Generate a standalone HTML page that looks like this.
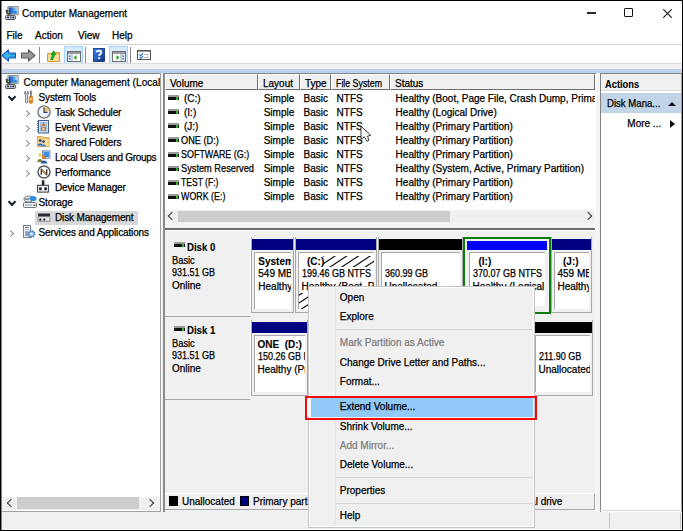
<!DOCTYPE html>
<html><head><meta charset="utf-8">
<style>
*{margin:0;padding:0;box-sizing:border-box}
html,body{width:683px;height:531px;overflow:hidden;background:#000}
body{position:relative;font-family:"Liberation Sans",sans-serif;font-size:10px;line-height:12px;color:#000}
.a{position:absolute}
.t{position:absolute;white-space:nowrap;line-height:12px;font-size:10px;-webkit-text-stroke:0.25px currentColor}
.b{font-weight:bold;-webkit-text-stroke:0.1px currentColor}
.g{color:#7d7d7d}
.clip{position:absolute;overflow:hidden}
.vi{position:absolute;width:11px;height:5px;background:#111;border-top:2px solid #9a9a9a}
.vi:after{content:"";position:absolute;right:1px;top:0;width:2px;height:3px;background:#2fb52f}
.chl,.chr{position:absolute;width:6px;height:6px;border-left:1.5px solid #333;border-bottom:1.5px solid #333}
.chl{transform:rotate(45deg)}
.chr{transform:rotate(-135deg)}
.chd{position:absolute;width:6px;height:6px;border-right:2px solid #15202e;border-bottom:2px solid #15202e;transform:rotate(45deg)}
.chr2{position:absolute;width:5px;height:5px;border-right:1.5px solid #8c8c8c;border-bottom:1.5px solid #8c8c8c;transform:rotate(-45deg)}
.tr .t{letter-spacing:-0.15px}
</style></head><body>
<div class="a" style="left:1px;top:1px;width:681px;height:529px;background:#fff"></div>
<svg class="a" style="left:4.7px;top:5.9px" width="14" height="14" viewBox="0 0 14 14"><defs><linearGradient id="scr" x1="0" y1="0" x2="1" y2="0"><stop offset="0" stop-color="#0d3fb8"/><stop offset="0.5" stop-color="#3d8fe6"/><stop offset="1" stop-color="#bfe2fa"/></linearGradient></defs><rect x="2.9" y="0.5" width="10.3" height="8.2" fill="#d9d2c8" stroke="#8f8a85" stroke-width="0.9"/><rect x="3.8" y="1.4" width="8.5" height="6.4" fill="url(#scr)"/><ellipse cx="10.3" cy="6.3" rx="2" ry="1.4" fill="#2f86e0"/><path d="M0.6 4 L2.2 3.6 L3.4 5.6 L5 4.8 L5.6 8.6 L3 8.8 L1.2 7.6 Z" fill="#3b3f45"/><circle cx="3.4" cy="6.2" r="0.8" fill="#8fd06a"/><rect x="0.6" y="9.6" width="9.8" height="3.9" rx="1" fill="#d4d6d9" stroke="#3d4248" stroke-width="0.9"/><circle cx="3" cy="11.5" r="1" fill="#2a2e33"/><circle cx="5.7" cy="11.5" r="1" fill="#2f5fa8"/><circle cx="8.3" cy="11.5" r="1" fill="#2a2e33"/></svg>
<div class="t " style="left:22px;top:8px;">Computer Management</div>
<div class="a" style="left:586.5px;top:12.3px;width:9px;height:1.4px;background:#2a2a2a"></div>
<div class="a" style="left:624px;top:8px;width:9px;height:9px;border:1px solid #111;border-radius:1px"></div>
<svg class="a" style="left:662.5px;top:8.5px" width="9" height="9" viewBox="0 0 9 9"><path d="M0.3 0.3 L8.7 8.7 M8.7 0.3 L0.3 8.7" stroke="#1a1a1a" stroke-width="1.15"/></svg>
<div class="t " style="left:6.5px;top:29.5px;">File</div>
<div class="t " style="left:35px;top:29.5px;">Action</div>
<div class="t " style="left:78px;top:29.5px;">View</div>
<div class="t " style="left:112px;top:29.5px;">Help</div>
<div class="a" style="left:1px;top:44px;width:681px;height:1px;background:#d4d4d4"></div>
<svg class="a" style="left:1px;top:49px" width="16" height="13" viewBox="0 0 16 13"><path d="M1 6.5 L7.5 0.8 L7.5 4 L14.5 4 L14.5 9 L7.5 9 L7.5 12.2 Z" fill="#38b6e8" stroke="#1b54c4" stroke-width="1.1" stroke-linejoin="round"/><path d="M9 5.5 H14 M9 7.5 H14" stroke="#2d78d0" stroke-width="0.8"/></svg>
<svg class="a" style="left:20px;top:49px" width="16" height="13" viewBox="0 0 16 13"><path d="M15 6.5 L8.5 0.8 L8.5 4 L1.5 4 L1.5 9 L8.5 9 L8.5 12.2 Z" fill="#9a9a9a" stroke="#5d5d5d" stroke-width="1.1" stroke-linejoin="round"/></svg>
<div class="a" style="left:39px;top:47px;width:1px;height:16px;background:#8a8a8a"></div>
<svg class="a" style="left:47px;top:49px" width="14" height="14" viewBox="0 0 14 14"><path d="M0.5 4.5 H4 L5 3.5 H12.5 V12.5 H0.5 Z" fill="#f7c56a" stroke="#e08a1c" stroke-width="0.9"/><rect x="1" y="6" width="11" height="6" fill="#fbdc9a"/><path d="M3 11 L5 6 L3.5 6 L6.5 1 L9.5 6 L8 6 L6 11 Z" fill="#19a61e"/></svg>
<div class="a" style="left:64px;top:46px;width:19px;height:18px;background:#d5ebfc;border:1px solid #9fd3fb"></div>
<svg class="a" style="left:67px;top:51px" width="14" height="11" viewBox="0 0 14 11"><rect x="0.5" y="0.5" width="13" height="10" fill="#fff" stroke="#6e6e6e"/><rect x="1" y="1" width="12" height="2" fill="#9a9a9a"/><rect x="1" y="3" width="3.5" height="7" fill="#dce6f0"/><rect x="2" y="4.5" width="1.5" height="1.5" fill="#3a7fd5"/><rect x="2" y="7" width="1.5" height="1.5" fill="#3a7fd5"/><path d="M5 3 V10" stroke="#8a8a8a" stroke-width="0.8"/><path d="M6.5 6.5 L9.5 4 L9.5 9 Z" fill="#1da21d"/></svg>
<div class="a" style="left:85px;top:47px;width:1px;height:16px;background:#8a8a8a"></div>
<svg class="a" style="left:93px;top:48px" width="12" height="14" viewBox="0 0 12 14"><defs><linearGradient id="hg" x1="0" y1="0" x2="1" y2="1"><stop offset="0" stop-color="#3f8ff0"/><stop offset="1" stop-color="#0b2e8c"/></linearGradient></defs><rect x="0.5" y="0.5" width="11" height="13" fill="url(#hg)" stroke="#0a2a6a" stroke-width="0.8"/><path d="M3.8 4.3 C3.8 2.2 8.3 2.2 8.3 4.3 C8.3 6 6.1 6 6.1 8" fill="none" stroke="#fff" stroke-width="1.8"/><rect x="5.2" y="9.2" width="1.9" height="1.9" fill="#fff"/></svg>
<div class="a" style="left:109px;top:46px;width:19px;height:18px;background:#d5ebfc;border:1px solid #9fd3fb"></div>
<svg class="a" style="left:112px;top:51px" width="14" height="11" viewBox="0 0 14 11"><rect x="0.5" y="0.5" width="13" height="10" fill="#fff" stroke="#6e6e6e"/><rect x="1" y="1" width="12" height="2" fill="#9a9a9a"/><rect x="9.5" y="3" width="3.5" height="7" fill="#dce6f0"/><rect x="10.5" y="4.5" width="1.5" height="1.5" fill="#3a7fd5"/><rect x="10.5" y="7" width="1.5" height="1.5" fill="#3a7fd5"/><path d="M9 3 V10" stroke="#8a8a8a" stroke-width="0.8"/><path d="M4.5 4 L7.5 6.5 L4.5 9 Z" fill="#1da21d"/></svg>
<div class="a" style="left:130px;top:47px;width:1px;height:16px;background:#8a8a8a"></div>
<svg class="a" style="left:137px;top:50px" width="14" height="10" viewBox="0 0 14 10"><rect x="0.5" y="0.5" width="13" height="9" fill="#fff" stroke="#555"/><rect x="1" y="1" width="12" height="1" fill="#999"/><path d="M2.5 4.5 L3.8 5.8 L6 3" fill="none" stroke="#1f74d6" stroke-width="1.1"/><path d="M2.5 7.3 L3.8 8.6 L6 5.8" fill="none" stroke="#1f74d6" stroke-width="1.1"/><path d="M7 4.5 H12 M7 7.5 H12" stroke="#a9a9a9" stroke-width="0.9"/></svg>
<div class="a" style="left:1px;top:63px;width:681px;height:6px;background:#f0f0f0;border-top:1px solid #dcdcdc"></div>
<div class="a" style="left:1px;top:69px;width:681px;height:4px;background:#bcd3ea"></div>
<div class="a" style="left:1px;top:73px;width:160px;height:439px;background:#fff;border-top:1px solid #828282;border-right:1px solid #a0a0a0;border-bottom:1px solid #a0a0a0"></div>
<div class="a" style="left:161px;top:73px;width:2px;height:439px;background:#f4f4f4"></div>
<div class="clip tr" style="left:1px;top:74px;width:159px;height:423px">
<div class="a" style="left:34px;top:136.5px;width:103px;height:14px;background:#d9d9d9"></div>
<div class="t " style="left:22.4px;top:2.8px;letter-spacing:0.07px">Computer Management (Local)</div>
<svg class="a" style="left:4.3px;top:1.0999999999999999px" width="14" height="14" viewBox="0 0 14 14"><defs><linearGradient id="scr" x1="0" y1="0" x2="1" y2="0"><stop offset="0" stop-color="#0d3fb8"/><stop offset="0.5" stop-color="#3d8fe6"/><stop offset="1" stop-color="#bfe2fa"/></linearGradient></defs><rect x="2.9" y="0.5" width="10.3" height="8.2" fill="#d9d2c8" stroke="#8f8a85" stroke-width="0.9"/><rect x="3.8" y="1.4" width="8.5" height="6.4" fill="url(#scr)"/><ellipse cx="10.3" cy="6.3" rx="2" ry="1.4" fill="#2f86e0"/><path d="M0.6 4 L2.2 3.6 L3.4 5.6 L5 4.8 L5.6 8.6 L3 8.8 L1.2 7.6 Z" fill="#3b3f45"/><circle cx="3.4" cy="6.2" r="0.8" fill="#8fd06a"/><rect x="0.6" y="9.6" width="9.8" height="3.9" rx="1" fill="#d4d6d9" stroke="#3d4248" stroke-width="0.9"/><circle cx="3" cy="11.5" r="1" fill="#2a2e33"/><circle cx="5.7" cy="11.5" r="1" fill="#2f5fa8"/><circle cx="8.3" cy="11.5" r="1" fill="#2a2e33"/></svg>
<div class="t " style="left:37.6px;top:17.8px;">System Tools</div>
<svg class="a" style="left:21.8px;top:16.1px" width="14" height="14" viewBox="0 0 14 14"><path d="M2.5 1 C1 2 1 4 2.5 5 L2.5 12 C2.5 13.5 4.5 13.5 4.5 12 L4.5 5 C6 4 6 2 4.5 1 L4.5 3.5 L2.5 3.5 Z" fill="#d6d9dc" stroke="#7d8288" stroke-width="0.9"/><rect x="7.2" y="0.5" width="1.4" height="6" fill="#55595e"/><path d="M6.2 6.5 L9.6 6.5 L9.8 12.5 C9.8 13.6 6 13.6 6 12.5 Z" fill="#e8891e" stroke="#b86512" stroke-width="0.6"/><rect x="6.5" y="8.6" width="3" height="1" fill="#fff2d8"/></svg>
<div class="chd" style="left:7.5px;top:19.8px"></div>
<div class="t " style="left:54px;top:32.8px;">Task Scheduler</div>
<svg class="a" style="left:35.9px;top:31.099999999999998px" width="14" height="14" viewBox="0 0 14 14"><circle cx="7" cy="7" r="6.1" fill="#eef4fa" stroke="#6f7379" stroke-width="1.4"/><path d="M7 1.5 A5.5 5.5 0 0 1 12.3 6 L7 7 Z" fill="#f3c552"/><circle cx="7" cy="7" r="4.9" fill="none" stroke="#d3dde8" stroke-width="0.5"/><path d="M7 2.6 L7 7.3 L10.6 7.3" fill="none" stroke="#1f3f8a" stroke-width="1.2"/></svg>
<div class="chr2" style="left:23px;top:37.0px"></div>
<div class="t " style="left:54px;top:47.8px;">Event Viewer</div>
<svg class="a" style="left:35.9px;top:46.099999999999994px" width="14" height="14" viewBox="0 0 14 14"><rect x="1.5" y="0.5" width="10" height="12.5" fill="#d8e6f3" stroke="#3f5f86"/><path d="M0.5 1 V13" stroke="#6a7580" stroke-width="1" stroke-dasharray="1 1"/><rect x="3" y="2" width="7" height="9.5" fill="#9cc3e6"/><path d="M6.5 2 L8.5 6 L4.5 6 Z" fill="#e8781e"/><rect x="4" y="7.5" width="5" height="3" fill="#d85f12"/><rect x="5" y="8.3" width="3" height="1.4" fill="#fde7c5"/></svg>
<div class="chr2" style="left:23px;top:52.0px"></div>
<div class="t " style="left:54px;top:62.8px;">Shared Folders</div>
<svg class="a" style="left:35.9px;top:61.099999999999994px" width="14" height="14" viewBox="0 0 14 14"><path d="M0.5 1.5 H5 L6 2.5 H12 V11.5 H0.5 Z" fill="#f3c873" stroke="#d8952a" stroke-width="0.8"/><rect x="1" y="4" width="10.6" height="7" fill="#fbdd9c"/><circle cx="3.2" cy="5.6" r="1.4" fill="#1d3f7a"/><path d="M0.8 10.5 C1 7.6 5.4 7.6 5.6 10.5 Z" fill="#2a6dc0"/><circle cx="6.5" cy="6.6" r="1.3" fill="#1d3f7a"/><path d="M4.2 11.5 C4.4 8.6 8.6 8.6 8.8 11.5 Z" fill="#3a8ad8"/></svg>
<div class="chr2" style="left:23px;top:67.0px"></div>
<div class="t " style="left:54px;top:77.8px;letter-spacing:-0.3px">Local Users and Groups</div>
<svg class="a" style="left:35.9px;top:76.1px" width="14" height="14" viewBox="0 0 14 14"><rect x="5.5" y="0.8" width="7.5" height="7.5" fill="#bcd6ee" stroke="#7a8ea3" stroke-width="0.9"/><rect x="6.5" y="1.8" width="5.5" height="5.2" fill="#3b8fe0"/><circle cx="3" cy="5" r="1.7" fill="#f2c46a"/><path d="M0.3 12 C0.5 8 5.5 8 5.7 12 Z" fill="#7b7f3a"/><circle cx="7" cy="7.3" r="2" fill="#d4782a"/><path d="M3.6 13.6 C3.9 9.5 10.1 9.5 10.4 13.6 Z" fill="#2f5d9c"/></svg>
<div class="chr2" style="left:23px;top:82.0px"></div>
<div class="t " style="left:54px;top:92.8px;">Performance</div>
<svg class="a" style="left:35.9px;top:91.1px" width="14" height="14" viewBox="0 0 14 14"><circle cx="7" cy="7" r="6" fill="#fff" stroke="#55595e" stroke-width="1.5"/><path d="M4.3 9.8 L4.3 4.2 L9.7 9.8 L9.7 4.2" fill="none" stroke="#2a2a2a" stroke-width="1.3" stroke-linejoin="round"/><path d="M4.8 5 L9.2 9.2" stroke="#e07a1a" stroke-width="1.1"/></svg>
<div class="chr2" style="left:23px;top:97.0px"></div>
<div class="t " style="left:54px;top:107.8px;">Device Manager</div>
<svg class="a" style="left:35.9px;top:106.1px" width="14" height="14" viewBox="0 0 14 14"><rect x="4.8" y="0.3" width="2.6" height="5" fill="#23272d"/><rect x="0.6" y="5.3" width="10.8" height="6.8" fill="#f2f3f4" stroke="#30343a" stroke-width="1"/><rect x="2.2" y="7.4" width="2.4" height="2.8" fill="#111"/><rect x="7.4" y="7.4" width="2.4" height="2.8" fill="#111"/></svg>
<div class="t " style="left:37.6px;top:122.8px;">Storage</div>
<svg class="a" style="left:21.8px;top:121.1px" width="14" height="14" viewBox="0 0 14 14"><rect x="0.5" y="7.5" width="13" height="5" rx="1" fill="#eef1f4" stroke="#6d747c"/><rect x="2" y="9" width="7" height="2" fill="#b9c8d8"/><rect x="10.5" y="9.5" width="2" height="1.5" fill="#5c5c5c"/><ellipse cx="5.5" cy="4" rx="4.5" ry="3" fill="#e3e7ec" stroke="#70777f"/><ellipse cx="10" cy="3.6" rx="3.5" ry="2.6" fill="#2d8fe6"/><rect x="2" y="3.5" width="4" height="1" fill="#444"/></svg>
<div class="chd" style="left:7.5px;top:124.8px"></div>
<div class="t " style="left:54px;top:137.8px;">Disk Management</div>
<svg class="a" style="left:35.9px;top:136.10000000000002px" width="14" height="14" viewBox="0 0 14 14"><rect x="1" y="3.5" width="12" height="3.2" fill="#2a2e34"/><path d="M1 6.7 H13 V11.3 H1 Z" fill="#e2e4e6" stroke="#7b8087" stroke-width="0.8"/><circle cx="3.3" cy="9.6" r="1.1" fill="#111"/><circle cx="7.3" cy="9.6" r="1.1" fill="#111"/></svg>
<div class="t " style="left:37.6px;top:152.8px;">Services and Applications</div>
<svg class="a" style="left:21.8px;top:151.10000000000002px" width="14" height="14" viewBox="0 0 14 14"><rect x="0.5" y="0.5" width="7" height="12" fill="#eef1f5" stroke="#79828c"/><rect x="2" y="2" width="4" height="1" fill="#6c7884"/><rect x="2" y="4" width="4" height="1" fill="#a9b3bd"/><rect x="2" y="6" width="3" height="5" fill="#9aa6b2"/><circle cx="8.5" cy="9" r="3.2" fill="#7fb2e4" stroke="#2f6fb6" stroke-width="1.2" stroke-dasharray="1.4 0.8"/><circle cx="8.5" cy="9" r="1.2" fill="#fff"/></svg>
<div class="chr2" style="left:6.5px;top:157.0px"></div>
</div>
<div class="a" style="left:2px;top:497px;width:158px;height:13px;background:#f0f0f0"></div>
<div class="a" style="left:17px;top:497px;width:122px;height:12px;background:#cdcdcd"></div>
<div class="chl" style="left:8px;top:499.5px"></div>
<div class="chr" style="left:147px;top:499.5px"></div>
<div class="a" style="left:163px;top:73px;width:433px;height:439px;background:#fff;border-top:1px solid #828282;border-left:2px solid #8a8a8a"></div>
<div class="a" style="left:596px;top:73px;width:4px;height:439px;background:#f4f4f4"></div>
<div class="a" style="left:165px;top:74px;width:430px;height:16px;background:#f0f0f0"></div>
<div class="a" style="left:165px;top:74px;width:93px;height:16px;border-top:1px solid #fff;border-left:1px solid #fff;border-right:1px solid #6e6e6e;border-bottom:1px solid #6e6e6e"></div>
<div class="clip" style="left:165px;top:74px;width:91px;height:15px"><div class="t " style="left:5px;top:3.5px;transform:scaleX(1);transform-origin:0 0">Volume</div></div>
<div class="a" style="left:258px;top:74px;width:42px;height:16px;border-top:1px solid #fff;border-left:1px solid #fff;border-right:1px solid #6e6e6e;border-bottom:1px solid #6e6e6e"></div>
<div class="clip" style="left:258px;top:74px;width:40px;height:15px"><div class="t " style="left:5px;top:3.5px;transform:scaleX(1);transform-origin:0 0">Layout</div></div>
<div class="a" style="left:300px;top:74px;width:31px;height:16px;border-top:1px solid #fff;border-left:1px solid #fff;border-right:1px solid #6e6e6e;border-bottom:1px solid #6e6e6e"></div>
<div class="clip" style="left:300px;top:74px;width:29px;height:15px"><div class="t " style="left:5px;top:3.5px;transform:scaleX(1);transform-origin:0 0">Type</div></div>
<div class="a" style="left:331px;top:74px;width:59px;height:16px;border-top:1px solid #fff;border-left:1px solid #fff;border-right:1px solid #6e6e6e;border-bottom:1px solid #6e6e6e"></div>
<div class="clip" style="left:331px;top:74px;width:57px;height:15px"><div class="t " style="left:5px;top:3.5px;transform:scaleX(0.88);transform-origin:0 0">File System</div></div>
<div class="a" style="left:390px;top:74px;width:205px;height:16px;border-top:1px solid #fff;border-left:1px solid #fff;border-right:1px solid #6e6e6e;border-bottom:1px solid #6e6e6e"></div>
<div class="clip" style="left:390px;top:74px;width:203px;height:15px"><div class="t " style="left:5px;top:3.5px;transform:scaleX(1);transform-origin:0 0">Status</div></div>
<div class="clip" style="left:165px;top:90px;width:92px;height:120px">
<div class="vi" style="left:2.5px;top:5.2px"></div>
<div class="t " style="left:19px;top:2.7px;transform:scaleX(1);transform-origin:0 0">(C:)</div>
<div class="vi" style="left:2.5px;top:19.28px"></div>
<div class="t " style="left:19px;top:16.78px;transform:scaleX(1);transform-origin:0 0">(I:)</div>
<div class="vi" style="left:2.5px;top:33.36px"></div>
<div class="t " style="left:19px;top:30.86px;transform:scaleX(1);transform-origin:0 0">(J:)</div>
<div class="vi" style="left:2.5px;top:47.440000000000005px"></div>
<div class="t " style="left:16px;top:44.940000000000005px;transform:scaleX(0.92);transform-origin:0 0">ONE (D:)</div>
<div class="vi" style="left:2.5px;top:61.52px"></div>
<div class="t " style="left:16px;top:59.02px;transform:scaleX(0.894);transform-origin:0 0">SOFTWARE (G:)</div>
<div class="vi" style="left:2.5px;top:75.60000000000001px"></div>
<div class="t " style="left:16px;top:73.10000000000001px;transform:scaleX(0.924);transform-origin:0 0">System Reserved</div>
<div class="vi" style="left:2.5px;top:89.68px"></div>
<div class="t " style="left:16px;top:87.18px;transform:scaleX(0.856);transform-origin:0 0">TEST (F:)</div>
<div class="vi" style="left:2.5px;top:103.76px"></div>
<div class="t " style="left:16px;top:101.26px;transform:scaleX(0.888);transform-origin:0 0">WORK (E:)</div>
</div>
<div class="clip" style="left:258px;top:90px;width:41px;height:120px">
<div class="t " style="left:5.7px;top:2.7px;">Simple</div>
<div class="t " style="left:5.7px;top:16.78px;">Simple</div>
<div class="t " style="left:5.7px;top:30.86px;">Simple</div>
<div class="t " style="left:5.7px;top:44.940000000000005px;">Simple</div>
<div class="t " style="left:5.7px;top:59.02px;">Simple</div>
<div class="t " style="left:5.7px;top:73.10000000000001px;">Simple</div>
<div class="t " style="left:5.7px;top:87.18px;">Simple</div>
<div class="t " style="left:5.7px;top:101.26px;">Simple</div>
</div>
<div class="clip" style="left:300px;top:90px;width:30px;height:120px">
<div class="t " style="left:3.5px;top:2.7px;">Basic</div>
<div class="t " style="left:3.5px;top:16.78px;">Basic</div>
<div class="t " style="left:3.5px;top:30.86px;">Basic</div>
<div class="t " style="left:3.5px;top:44.940000000000005px;">Basic</div>
<div class="t " style="left:3.5px;top:59.02px;">Basic</div>
<div class="t " style="left:3.5px;top:73.10000000000001px;">Basic</div>
<div class="t " style="left:3.5px;top:87.18px;">Basic</div>
<div class="t " style="left:3.5px;top:101.26px;">Basic</div>
</div>
<div class="clip" style="left:331px;top:90px;width:58px;height:120px">
<div class="t " style="left:5.6px;top:2.7px;">NTFS</div>
<div class="t " style="left:5.6px;top:16.78px;">NTFS</div>
<div class="t " style="left:5.6px;top:30.86px;">NTFS</div>
<div class="t " style="left:5.6px;top:44.940000000000005px;">NTFS</div>
<div class="t " style="left:5.6px;top:59.02px;">NTFS</div>
<div class="t " style="left:5.6px;top:73.10000000000001px;">NTFS</div>
<div class="t " style="left:5.6px;top:87.18px;">NTFS</div>
<div class="t " style="left:5.6px;top:101.26px;">NTFS</div>
</div>
<div class="clip" style="left:390px;top:90px;width:205px;height:120px">
<div class="t " style="left:5.6px;top:2.7px;">Healthy (Boot, Page File, Crash Dump, Primary Partition)</div>
<div class="t " style="left:5.6px;top:16.78px;">Healthy (Logical Drive)</div>
<div class="t " style="left:5.6px;top:30.86px;">Healthy (Primary Partition)</div>
<div class="t " style="left:5.6px;top:44.940000000000005px;">Healthy (Primary Partition)</div>
<div class="t " style="left:5.6px;top:59.02px;">Healthy (Primary Partition)</div>
<div class="t " style="left:5.6px;top:73.10000000000001px;">Healthy (System, Active, Primary Partition)</div>
<div class="t " style="left:5.6px;top:87.18px;">Healthy (Primary Partition)</div>
<div class="t " style="left:5.6px;top:101.26px;">Healthy (Primary Partition)</div>
</div>
<div class="a" style="left:165px;top:210px;width:430px;height:13px;background:#f0f0f0"></div>
<div class="a" style="left:178px;top:211px;width:272px;height:11px;background:#cdcdcd"></div>
<div class="chl" style="left:169px;top:213px"></div>
<div class="chr" style="left:585px;top:213px"></div>
<div class="a" style="left:165px;top:223px;width:430px;height:5px;background:#f4f4f4"></div>
<div class="a" style="left:165px;top:228px;width:430px;height:2px;background:#6e6e6e"></div>
<div class="a" style="left:165px;top:230px;width:430px;height:282px;background:#f0f0f0"></div>
<div class="a" style="left:165px;top:230px;width:430px;height:1px;background:#fff"></div>
<div class="a" style="left:165px;top:233px;width:86px;height:84px;border-bottom:1px solid #a8a8a8;border-right:1px solid #fdfdfd"></div>
<div class="vi" style="left:174px;top:242.3px;width:11px;height:5px;border-top-width:2px"></div>
<div class="t b" style="left:187px;top:241.7px;transform:scaleX(0.96);transform-origin:0 0">Disk 0</div>
<div class="t " style="left:172px;top:254.7px;transform:scaleX(0.93);transform-origin:0 0">Basic</div>
<div class="t " style="left:172px;top:267.2px;transform:scaleX(0.9);transform-origin:0 0">931.51 GB</div>
<div class="t " style="left:172px;top:279.7px;">Online</div>
<div class="a" style="left:165px;top:318px;width:86px;height:82px;border-bottom:1px solid #a8a8a8;border-right:1px solid #fdfdfd"></div>
<div class="vi" style="left:174px;top:325.5px;width:11px;height:5px;border-top-width:2px"></div>
<div class="t b" style="left:187px;top:324.9px;transform:scaleX(0.96);transform-origin:0 0">Disk 1</div>
<div class="t " style="left:172px;top:337.9px;transform:scaleX(0.93);transform-origin:0 0">Basic</div>
<div class="t " style="left:172px;top:350.4px;transform:scaleX(0.9);transform-origin:0 0">931.51 GB</div>
<div class="t " style="left:172px;top:362.9px;">Online</div>
<div class="a" style="left:251px;top:237px;width:43px;height:76px;background:#f0f0f0;border-left:1px solid #a8a8a8;border-right:1px solid #a8a8a8;border-bottom:1px solid #a8a8a8"></div>
<div class="a" style="left:252px;top:239.0px;width:41px;height:11.0px;background:#000080"></div>
<div class="clip" style="left:254px;top:252px;width:37px;height:57px;background:#fff;border-top:1px solid #a8a8a8;border-left:1px solid #a8a8a8">
<div class="t b" style="left:3.3px;top:2.8px;">System</div>
<div class="t " style="left:3.3px;top:15.399999999999999px;">549 MB</div>
<div class="t " style="left:3.3px;top:28.0px;">Healthy</div>
</div>
<div class="a" style="left:295px;top:237px;width:82px;height:76px;background:#f0f0f0;border-left:1px solid #a8a8a8;border-right:1px solid #a8a8a8;border-bottom:1px solid #a8a8a8"></div>
<div class="a" style="left:296px;top:239.0px;width:80px;height:11.0px;background:#000080"></div>
<div class="clip" style="left:298px;top:252px;width:76px;height:57px;background:#fff;border-top:1px solid #a8a8a8;border-left:1px solid #a8a8a8"><svg class="a" style="left:0;top:0" width="80" height="60"><g stroke="#1a1a1a" stroke-width="1.25"><line x1="-106.2" y1="66" x2="-6.2" y2="0"/><line x1="-94.5" y1="66" x2="5.5" y2="0"/><line x1="-82.8" y1="66" x2="17.2" y2="0"/><line x1="-71.1" y1="66" x2="28.9" y2="0"/><line x1="-59.4" y1="66" x2="40.6" y2="0"/><line x1="-47.7" y1="66" x2="52.3" y2="0"/><line x1="-36.0" y1="66" x2="64.0" y2="0"/><line x1="-24.3" y1="66" x2="75.7" y2="0"/><line x1="-12.6" y1="66" x2="87.4" y2="0"/><line x1="-0.9" y1="66" x2="99.1" y2="0"/><line x1="10.8" y1="66" x2="110.8" y2="0"/><line x1="22.5" y1="66" x2="122.5" y2="0"/><line x1="34.2" y1="66" x2="134.2" y2="0"/><line x1="45.9" y1="66" x2="145.9" y2="0"/><line x1="57.6" y1="66" x2="157.6" y2="0"/><line x1="69.3" y1="66" x2="169.3" y2="0"/></g></svg><div class="a" style="left:0;top:0;width:80px;height:2.5px;background:#fff"></div><div class="a" style="left:0;top:2px;width:24px;height:12px;background:#fff"></div><div class="a" style="left:0;top:14px;width:80px;height:26px;background:#fff"></div>
<div class="t b" style="left:8px;top:2.8px;">(C:)</div>
<div class="t " style="left:2.5px;top:15.399999999999999px;transform:scaleX(0.9);transform-origin:0 0">199.46 GB NTFS</div>
<div class="t " style="left:2.5px;top:28.0px;">Healthy (Boot, Page File</div>
</div>
<div class="a" style="left:378px;top:237px;width:85px;height:76px;background:#f0f0f0;border-left:1px solid #a8a8a8;border-right:1px solid #a8a8a8;border-bottom:1px solid #a8a8a8"></div>
<div class="a" style="left:379px;top:239.0px;width:83px;height:11.0px;background:#000"></div>
<div class="clip" style="left:381px;top:252px;width:79px;height:57px;background:#fff;border-top:1px solid #a8a8a8;border-left:1px solid #a8a8a8">
<div class="t b" style="left:2.5px;top:2.8px;"></div>
<div class="t " style="left:2.5px;top:15.399999999999999px;transform:scaleX(0.9);transform-origin:0 0">360.99 GB</div>
<div class="t " style="left:2.5px;top:28.0px;">Unallocated</div>
</div>
<div class="a" style="left:463px;top:237px;width:88px;height:76px;background:#f0f0f0;border-left:1px solid #a8a8a8;border-right:1px solid #a8a8a8;border-bottom:1px solid #a8a8a8"></div>
<div class="a" style="left:467px;top:240.5px;width:80px;height:9.5px;background:#0000ff"></div>
<div class="clip" style="left:469px;top:252px;width:76px;height:54px;background:#fff;border-top:1px solid #a8a8a8;border-left:1px solid #a8a8a8">
<div class="t b" style="left:8.5px;top:2.8px;">(I:)</div>
<div class="t " style="left:2.5px;top:15.399999999999999px;transform:scaleX(0.9);transform-origin:0 0">370.07 GB NTFS</div>
<div class="t " style="left:2.5px;top:28.0px;">Healthy (Logical Drive)</div>
</div>
<div class="a" style="left:463px;top:237px;width:88px;height:77px;border:2.6px solid #0f7b0f"></div>
<div class="a" style="left:551px;top:237px;width:41px;height:76px;background:#f0f0f0;border-left:1px solid #a8a8a8;border-right:1px solid #a8a8a8;border-bottom:1px solid #a8a8a8"></div>
<div class="a" style="left:552px;top:239.0px;width:39px;height:11.0px;background:#000080"></div>
<div class="clip" style="left:554px;top:252px;width:35px;height:57px;background:#fff;border-top:1px solid #a8a8a8;border-left:1px solid #a8a8a8">
<div class="t b" style="left:8px;top:2.8px;">(J:)</div>
<div class="t " style="left:2.5px;top:15.399999999999999px;">459 MB</div>
<div class="t " style="left:2.5px;top:28.0px;">Healthy</div>
</div>
<div class="a" style="left:251px;top:320px;width:57px;height:76px;background:#f0f0f0;border-left:1px solid #a8a8a8;border-right:1px solid #a8a8a8;border-bottom:1px solid #a8a8a8"></div>
<div class="a" style="left:252px;top:322.0px;width:55px;height:11.0px;background:#000080"></div>
<div class="clip" style="left:254px;top:335px;width:51px;height:57px;background:#fff;border-top:1px solid #a8a8a8;border-left:1px solid #a8a8a8">
<div class="t b" style="left:2.5px;top:2.8px;">ONE&nbsp;&nbsp;(D:)</div>
<div class="t " style="left:2.5px;top:15.399999999999999px;transform:scaleX(0.9);transform-origin:0 0">150.26 GB NTFS</div>
<div class="t " style="left:2.5px;top:28.0px;">Healthy (Primary</div>
</div>
<div class="a" style="left:532px;top:320px;width:61px;height:76px;background:#f0f0f0;border-left:1px solid #a8a8a8;border-right:1px solid #a8a8a8;border-bottom:1px solid #a8a8a8"></div>
<div class="a" style="left:533px;top:322.0px;width:59px;height:11.0px;background:#000"></div>
<div class="clip" style="left:535px;top:335px;width:55px;height:57px;background:#fff;border-top:1px solid #a8a8a8;border-left:1px solid #a8a8a8">
<div class="t b" style="left:2.5px;top:2.8px;"></div>
<div class="t " style="left:2.5px;top:15.399999999999999px;transform:scaleX(0.9);transform-origin:0 0">211.90 GB</div>
<div class="t " style="left:2.5px;top:28.0px;">Unallocated</div>
</div>
<div class="a" style="left:165px;top:493px;width:430px;height:17px;background:#f0f0f0;border-top:1px solid #fff;border-bottom:1px solid #a8a8a8;border-right:1px solid #a8a8a8"></div>
<div class="a" style="left:169px;top:496px;width:9px;height:10px;background:#000;border:1px solid #000"></div>
<div class="t " style="left:182px;top:495.9px;">Unallocated</div>
<div class="a" style="left:240px;top:496px;width:9px;height:10px;background:#000080;border:1px solid #000"></div>
<div class="t " style="left:253px;top:495.9px;">Primary partition</div>
<div class="a" style="left:334px;top:496px;width:9px;height:10px;background:#008000;border:1px solid #000"></div>
<div class="t " style="left:347px;top:495.9px;">Extended partition</div>
<div class="a" style="left:420px;top:496px;width:9px;height:10px;background:#80ff80;border:1px solid #000"></div>
<div class="t " style="left:433px;top:495.9px;">Free space</div>
<div class="a" style="left:493.2px;top:496px;width:9px;height:10px;background:#0000ff;border:1px solid #000"></div>
<div class="t " style="left:506.2px;top:495.9px;">Logical drive</div>
<div class="a" style="left:600px;top:73px;width:82px;height:439px;background:#fff;border-top:1px solid #828282;border-left:1px solid #828282;border-right:1px solid #a0a0a0"></div>
<div class="a" style="left:601px;top:74px;width:80px;height:17px;background:#f0f0f0;border-bottom:1px solid #d8d8d8"></div>
<div class="t b" style="left:605.3px;top:79px;transform:scaleX(0.93);transform-origin:0 0">Actions</div>
<div class="a" style="left:601px;top:93px;width:80px;height:20px;background:#c1d4e8"></div>
<div class="t " style="left:606.6px;top:98px;transform:scaleX(0.96);transform-origin:0 0">Disk Mana...</div>
<div class="a" style="left:667.5px;top:101.5px;width:0px;height:0px;border-left:4px solid transparent;border-right:4px solid transparent;border-bottom:4px solid #111"></div>
<div class="t " style="left:627.3px;top:117.6px;">More ...</div>
<div class="a" style="left:669.5px;top:120px;width:0px;height:0px;border-top:4px solid transparent;border-bottom:4px solid transparent;border-left:5px solid #111"></div>
<div class="a" style="left:1px;top:512px;width:681px;height:17px;background:#f0f0f0"></div>
<div class="a" style="left:609px;top:513px;width:1px;height:16px;background:#c8c8c8"></div>
<div class="a" style="left:679.5px;top:513px;width:1px;height:16px;background:#c8c8c8"></div>
<div class="a" style="left:600px;top:510px;width:82px;height:1px;background:#d8d8d8"></div>
<div class="a" style="left:308px;top:286px;width:227px;height:242px;background:#f0f0f0;border:1px solid #c4c4c4;box-shadow:inset 0 0 0 1px #fff"></div>
<div class="a" style="left:335px;top:288px;width:1px;height:238px;background:#e3e3e3"></div>
<div class="a" style="left:311px;top:398px;width:222px;height:19px;background:#91c9f7"></div>
<div class="a" style="left:306px;top:398px;width:5px;height:19px;background:#fff"></div>
<div class="a" style="left:304.5px;top:396px;width:232px;height:24px;border:2px solid #f00a0a"></div>
<div class="t " style="left:339.8px;top:292.3px;">Open</div>
<div class="t " style="left:339.8px;top:311px;">Explore</div>
<div class="a" style="left:336px;top:329px;width:197px;height:1px;background:#d7d7d7"></div>
<div class="t g" style="left:339.8px;top:337.4px;">Mark Partition as Active</div>
<div class="t " style="left:339.8px;top:356.8px;">Change Drive Letter and Paths...</div>
<div class="t " style="left:339.8px;top:375.8px;">Format...</div>
<div class="t " style="left:339.8px;top:401.2px;">Extend Volume...</div>
<div class="t " style="left:339.8px;top:420.5px;">Shrink Volume...</div>
<div class="t g" style="left:339.8px;top:439.8px;">Add Mirror...</div>
<div class="t " style="left:339.8px;top:459px;">Delete Volume...</div>
<div class="a" style="left:336px;top:477px;width:197px;height:1px;background:#d7d7d7"></div>
<div class="t " style="left:339.8px;top:484.6px;">Properties</div>
<div class="a" style="left:336px;top:503px;width:197px;height:1px;background:#d7d7d7"></div>
<div class="t " style="left:339.8px;top:509.5px;">Help</div>
<svg class="a" style="left:359px;top:124px" width="14" height="19" viewBox="0 0 14 19"><path d="M1.9 2.1 L2.1 15.3 L5.4 12.7 L8 17.4 L9.9 16.2 L8.5 12.2 L11.8 11.3 Z" fill="#fff" stroke="#222" stroke-width="0.9" stroke-linejoin="round"/></svg>
<div class="a" style="left:1px;top:1px;width:1px;height:529px;background:#7d8590"></div>
</body></html>
